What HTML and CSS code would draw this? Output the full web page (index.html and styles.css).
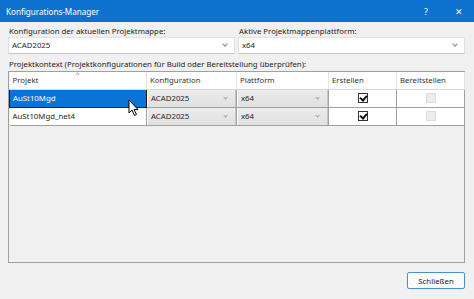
FILE: index.html
```html
<!DOCTYPE html>
<html lang="de">
<head>
	<meta charset="UTF-8">
	<title>Konfigurations-Manager</title>
	<link rel="stylesheet" href="styles.css">
</head>
<body>
<div class="dialog">
	<div class="titlebar">
		<span class="title">Konfigurations-Manager</span>
		<span class="help">?</span>
		<span class="close">&#x2715;</span>
	</div>
	<div class="content">
		<div class="top">
			<div class="field">
				<label>Konfiguration der aktuellen Projektmappe:</label>
				<div class="combo">ACAD2025<span class="chev"></span></div>
			</div>
			<div class="field">
				<label>Aktive Projektmappenplattform:</label>
				<div class="combo">x64<span class="chev"></span></div>
			</div>
		</div>
		<div class="ctx-label">Projektkontext (Projektkonfigurationen für Build oder Bereitstellung überprüfen):</div>
		<div class="grid">
			<table>
				<tr class="head">
					<th class="c-proj">Projekt<span class="sort"></span></th>
					<th class="c-conf">Konfiguration</th>
					<th class="c-plat">Plattform</th>
					<th class="c-build">Erstellen</th>
					<th class="c-deploy">Bereitstellen</th>
				</tr>
				<tr class="selected">
					<td class="name">AuSt10Mgd</td>
					<td><div class="cell-combo">ACAD2025<span class="chev"></span></div></td>
					<td><div class="cell-combo">x64<span class="chev"></span></div></td>
					<td class="check"><span class="box on"></span></td>
					<td class="check"><span class="box off"></span></td>
				</tr>
				<tr>
					<td class="name">AuSt10Mgd_net4</td>
					<td><div class="cell-combo">ACAD2025<span class="chev"></span></div></td>
					<td><div class="cell-combo">x64<span class="chev"></span></div></td>
					<td class="check"><span class="box on"></span></td>
					<td class="check"><span class="box off"></span></td>
				</tr>
			</table>
			<svg class="cursor" width="12" height="18" viewBox="0 0 12 18">
				<path d="M1 1 L1 14 L4 11 L6.5 16.5 L8.5 15.5 L6 10.5 L10 10.5 Z" fill="#fff" stroke="#000" stroke-width="1"/>
			</svg>
		</div>
		<div class="footer">
			<button class="btn">Schließen</button>
		</div>
	</div>
</div>
</body>
</html>
```

FILE: styles.css
```css
* {
	margin: 0;
	padding: 0;
	box-sizing: border-box;
}

body {
	width: 474px;
	height: 299px;
	background: #f0f0f0;
	font-family: "Noto Sans", "Open Sans", sans-serif;
	font-size: 7.8px;
	color: #1e1e1e;
	overflow: hidden;
}

.dialog {
	display: flex;
	flex-direction: column;
	height: 299px;
}

.titlebar {
	height: 22px;
	background: #0c71cf;
	color: #fff;
	display: flex;
	align-items: center;
	padding-left: 6px;
	font-size: 8.1px;
}

.title {
	flex: 1;
}

.help {
	width: 34px;
	text-align: center;
	font-size: 9px;
}

.close {
	width: 31px;
	text-align: center;
	font-size: 9px;
}

.content {
	flex: 1;
	padding: 4px 9px 0 8px;
	display: flex;
	flex-direction: column;
}

.top {
	display: flex;
	gap: 3px;
}

.field {
	flex: 1;
	display: flex;
	flex-direction: column;
}

.field label {
	height: 11px;
	line-height: 11px;
	padding-left: 1px;
}

.combo {
	height: 17px;
	background: #fff;
	border: 1px solid #e2e2e2;
	border-bottom-color: #c8c8c8;
	padding-left: 3px;
	line-height: 15px;
	position: relative;
}

.chev {
	position: absolute;
	right: 7px;
	top: 4px;
	width: 4px;
	height: 4px;
	border-right: 1px solid #8a8a8a;
	border-bottom: 1px solid #8a8a8a;
	transform: rotate(45deg);
}

.ctx-label {
	margin-top: 4px;
	padding-left: 1px;
	height: 13px;
	line-height: 13px;
}

.grid {
	height: 192px;
	border: 1px solid #a0a0a0;
	background: #f0f0f0;
	position: relative;
}

table {
	border-collapse: collapse;
	table-layout: fixed;
	width: 455px;
}

th {
	height: 17px;
	background: #fff;
	font-weight: normal;
	text-align: left;
	padding-left: 3px;
	border-right: 1px solid #e3e3e3;
	border-bottom: 1px solid #d8d8d8;
	position: relative;
	color: #333;
}

.c-proj { width: 137px; }
.c-conf { width: 90px; }
.c-plat { width: 92px; }
.c-build { width: 68px; }
.c-deploy { width: 68px; }

.sort {
	position: absolute;
	left: 66px;
	top: 1px;
	width: 3px;
	height: 3px;
	border-left: 1px solid #b0b0b0;
	border-top: 1px solid #b0b0b0;
	transform: rotate(45deg);
}

td {
	height: 18px;
	background: #fff;
	border: 1px solid #a0a0a0;
	border-top: 0;
	padding: 0;
}

td.name {
	padding-left: 3px;
	border-left: 0;
}

.selected td.name {
	background: #0a74d4;
	color: #fff;
	border: 1px solid #1a1a1a;
}

.cell-combo {
	height: 17px;
	margin-left: 1px;
	background: linear-gradient(#ececec, #e0e0e0);
	border-right: 1px solid #c6c6c6;
	padding-left: 3px;
	line-height: 17px;
	position: relative;
}

.cell-combo .chev {
	top: 6px;
	width: 3px;
	height: 3px;
	right: 8px;
	border-color: #a0a0a0;
}

td.check {
	text-align: center;
}

.box {
	display: inline-block;
	width: 10px;
	height: 10px;
	vertical-align: middle;
	position: relative;
}

.box.on {
	border: 1px solid #333;
	background: #fff;
}

.box.on::after {
	content: "";
	position: absolute;
	left: 2.5px;
	top: 0;
	width: 3px;
	height: 5px;
	border-right: 2px solid #111;
	border-bottom: 2px solid #111;
	transform: rotate(40deg);
}

.box.off {
	border: 1px solid #dcdcdc;
	background: #ededed;
}

.cursor {
	position: absolute;
	left: 119px;
	top: 27px;
}

.footer {
	display: flex;
	justify-content: flex-end;
	padding-top: 9px;
}

.btn {
	width: 58px;
	height: 17px;
	background: #fdfdfd;
	border: 1px solid #4a8fd0;
	border-radius: 2px;
	font-family: "Noto Sans", "Open Sans", sans-serif;
	font-size: 7.8px;
	color: #1e1e1e;
}
```
